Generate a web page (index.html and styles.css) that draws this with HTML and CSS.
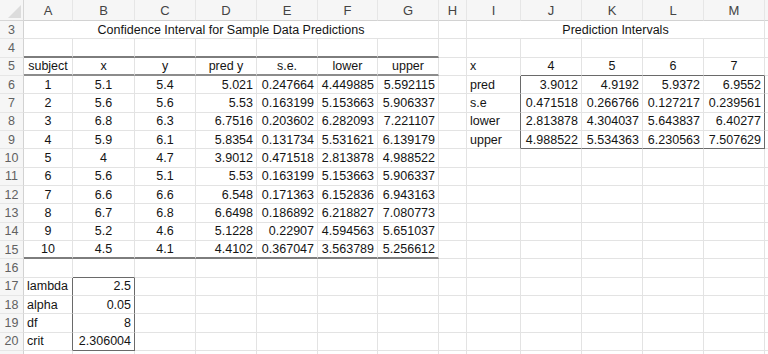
FILE: index.html
```html
<!DOCTYPE html>
<html lang="en">
<head>
<meta charset="utf-8">
<title>Confidence Interval for Sample Data Predictions</title>
<link rel="stylesheet" href="styles.css">
</head>
<body>
<div class="sheet">
  <!-- column headers -->
  <div class="c corner"></div>
  <div class="c hd">A</div><div class="c hd">B</div><div class="c hd">C</div><div class="c hd">D</div><div class="c hd">E</div><div class="c hd">F</div><div class="c hd">G</div><div class="c hd">H</div><div class="c hd">I</div><div class="c hd">J</div><div class="c hd">K</div><div class="c hd">L</div><div class="c hd">M</div><div class="c hd"></div>

  <!-- row 3 -->
  <div class="c rn">3</div>
  <div class="c ctr span-ag">Confidence Interval for Sample Data Predictions</div>
  <div class="c"></div>
  <div class="c ctr span-im">Prediction Intervals</div>
  <div class="c"></div>

  <!-- row 4 -->
  <div class="c rn">4</div>
  <div class="c tk"></div><div class="c tk"></div><div class="c tk"></div><div class="c tk"></div><div class="c tk"></div><div class="c tk"></div><div class="c tk"></div>
  <div class="c"></div><div class="c"></div><div class="c"></div><div class="c"></div><div class="c"></div><div class="c"></div><div class="c"></div>

  <!-- row 5 -->
  <div class="c rn">5</div>
  <div class="c md ctr">subject</div><div class="c md ctr">x</div><div class="c md ctr">y</div><div class="c md ctr">pred y</div><div class="c md ctr">s.e.</div><div class="c md ctr">lower</div><div class="c md ctr">upper</div>
  <div class="c"></div><div class="c">x</div>
  <div class="c ctr bb">4</div><div class="c ctr bb">5</div><div class="c ctr bb">6</div><div class="c ctr bb">7</div>
  <div class="c"></div>

  <!-- row 6 -->
  <div class="c rn">6</div>
  <div class="c ctr">1</div><div class="c ctr">5.1</div><div class="c ctr">5.4</div><div class="c r">5.021</div><div class="c r">0.247664</div><div class="c r">4.449885</div><div class="c r">5.592115</div>
  <div class="c"></div><div class="c br">pred</div>
  <div class="c r">3.9012</div><div class="c r">4.9192</div><div class="c r">5.9372</div><div class="c r br">6.9552</div>
  <div class="c"></div>

  <!-- row 7 -->
  <div class="c rn">7</div>
  <div class="c ctr">2</div><div class="c ctr">5.6</div><div class="c ctr">5.6</div><div class="c r">5.53</div><div class="c r">0.163199</div><div class="c r">5.153663</div><div class="c r">5.906337</div>
  <div class="c"></div><div class="c br">s.e</div>
  <div class="c r">0.471518</div><div class="c r">0.266766</div><div class="c r">0.127217</div><div class="c r br">0.239561</div>
  <div class="c"></div>

  <!-- row 8 -->
  <div class="c rn">8</div>
  <div class="c ctr">3</div><div class="c ctr">6.8</div><div class="c ctr">6.3</div><div class="c r">6.7516</div><div class="c r">0.203602</div><div class="c r">6.282093</div><div class="c r">7.221107</div>
  <div class="c"></div><div class="c br">lower</div>
  <div class="c r">2.813878</div><div class="c r">4.304037</div><div class="c r">5.643837</div><div class="c r br">6.40277</div>
  <div class="c"></div>

  <!-- row 9 -->
  <div class="c rn">9</div>
  <div class="c ctr">4</div><div class="c ctr">5.9</div><div class="c ctr">6.1</div><div class="c r">5.8354</div><div class="c r">0.131734</div><div class="c r">5.531621</div><div class="c r">6.139179</div>
  <div class="c"></div><div class="c br">upper</div>
  <div class="c r bb">4.988522</div><div class="c r bb">5.534363</div><div class="c r bb">6.230563</div><div class="c r br bb">7.507629</div>
  <div class="c"></div>

  <!-- row 10 -->
  <div class="c rn">10</div>
  <div class="c ctr">5</div><div class="c ctr">4</div><div class="c ctr">4.7</div><div class="c r">3.9012</div><div class="c r">0.471518</div><div class="c r">2.813878</div><div class="c r">4.988522</div>
  <div class="c"></div><div class="c"></div><div class="c"></div><div class="c"></div><div class="c"></div><div class="c"></div><div class="c"></div>

  <!-- row 11 -->
  <div class="c rn">11</div>
  <div class="c ctr">6</div><div class="c ctr">5.6</div><div class="c ctr">5.1</div><div class="c r">5.53</div><div class="c r">0.163199</div><div class="c r">5.153663</div><div class="c r">5.906337</div>
  <div class="c"></div><div class="c"></div><div class="c"></div><div class="c"></div><div class="c"></div><div class="c"></div><div class="c"></div>

  <!-- row 12 -->
  <div class="c rn">12</div>
  <div class="c ctr">7</div><div class="c ctr">6.6</div><div class="c ctr">6.6</div><div class="c r">6.548</div><div class="c r">0.171363</div><div class="c r">6.152836</div><div class="c r">6.943163</div>
  <div class="c"></div><div class="c"></div><div class="c"></div><div class="c"></div><div class="c"></div><div class="c"></div><div class="c"></div>

  <!-- row 13 -->
  <div class="c rn">13</div>
  <div class="c ctr">8</div><div class="c ctr">6.7</div><div class="c ctr">6.8</div><div class="c r">6.6498</div><div class="c r">0.186892</div><div class="c r">6.218827</div><div class="c r">7.080773</div>
  <div class="c"></div><div class="c"></div><div class="c"></div><div class="c"></div><div class="c"></div><div class="c"></div><div class="c"></div>

  <!-- row 14 -->
  <div class="c rn">14</div>
  <div class="c ctr">9</div><div class="c ctr">5.2</div><div class="c ctr">4.6</div><div class="c r">5.1228</div><div class="c r">0.22907</div><div class="c r">4.594563</div><div class="c r">5.651037</div>
  <div class="c"></div><div class="c"></div><div class="c"></div><div class="c"></div><div class="c"></div><div class="c"></div><div class="c"></div>

  <!-- row 15 -->
  <div class="c rn">15</div>
  <div class="c ctr tk">10</div><div class="c ctr tk">4.5</div><div class="c ctr tk">4.1</div><div class="c r tk">4.4102</div><div class="c r tk">0.367047</div><div class="c r tk">3.563789</div><div class="c r tk">5.256612</div>
  <div class="c"></div><div class="c"></div><div class="c"></div><div class="c"></div><div class="c"></div><div class="c"></div><div class="c"></div>

  <!-- row 16 -->
  <div class="c rn">16</div>
  <div class="c"></div><div class="c bb"></div><div class="c"></div><div class="c"></div><div class="c"></div><div class="c"></div><div class="c"></div>
  <div class="c"></div><div class="c"></div><div class="c"></div><div class="c"></div><div class="c"></div><div class="c"></div><div class="c"></div>

  <!-- row 17 -->
  <div class="c rn">17</div>
  <div class="c br">lambda</div><div class="c r br">2.5</div><div class="c"></div><div class="c"></div><div class="c"></div><div class="c"></div><div class="c"></div>
  <div class="c"></div><div class="c"></div><div class="c"></div><div class="c"></div><div class="c"></div><div class="c"></div><div class="c"></div>

  <!-- row 18 -->
  <div class="c rn">18</div>
  <div class="c br">alpha</div><div class="c r br">0.05</div><div class="c"></div><div class="c"></div><div class="c"></div><div class="c"></div><div class="c"></div>
  <div class="c"></div><div class="c"></div><div class="c"></div><div class="c"></div><div class="c"></div><div class="c"></div><div class="c"></div>

  <!-- row 19 -->
  <div class="c rn">19</div>
  <div class="c br">df</div><div class="c r br">8</div><div class="c"></div><div class="c"></div><div class="c"></div><div class="c"></div><div class="c"></div>
  <div class="c"></div><div class="c"></div><div class="c"></div><div class="c"></div><div class="c"></div><div class="c"></div><div class="c"></div>

  <!-- row 20 -->
  <div class="c rn">20</div>
  <div class="c br">crit</div><div class="c r br bb">2.306004</div><div class="c"></div><div class="c"></div><div class="c"></div><div class="c"></div><div class="c"></div>
  <div class="c"></div><div class="c"></div><div class="c"></div><div class="c"></div><div class="c"></div><div class="c"></div><div class="c"></div>

  <!-- row 21 (partially visible, label cut off by the window) -->
  <div class="c rn"></div>
  <div class="c"></div><div class="c"></div><div class="c"></div><div class="c"></div><div class="c"></div><div class="c"></div><div class="c"></div>
  <div class="c"></div><div class="c"></div><div class="c"></div><div class="c"></div><div class="c"></div><div class="c"></div><div class="c"></div>
</div>
</body>
</html>
```

FILE: styles.css
```css
* { box-sizing: border-box; }

html, body {
  margin: 0;
  background: #ffffff;
  height: 354px;
  overflow: hidden;
}

body {
  font-family: "Liberation Sans", Arial, sans-serif;
  font-size: 12.5px;
  color: #141414;
}

.sheet {
  display: grid;
  grid-template-columns: 24px 49px 62px 61px 61px 61px 60px 61px 28px 54px 61px 61px 61px 61px 3px;
  grid-template-rows: 21px repeat(19, 18.333px);
}

.c {
  display: flex;
  align-items: center;
  padding: 0 3px;
  white-space: nowrap;
  overflow: hidden;
  border-right: 1px solid #e3e3e3;
  border-bottom: 1px solid #e3e3e3;
}

.corner {
  background: #f6f6f6;
  justify-content: flex-end;
  align-items: flex-end;
  padding: 0 2px 2px 0;
  border-color: #d6d6d6;
}

.corner::after {
  content: "";
  width: 13px;
  height: 13px;
  background: #dcdcdc;
  clip-path: polygon(100% 0, 100% 100%, 0 100%);
}

.hd {
  background: #f6f6f6;
  color: #444444;
  font-size: 13px;
  justify-content: center;
  border-right-color: #e6e6e6;
  border-bottom-color: #d2d2d2;
}

.rn {
  background: #f6f6f6;
  color: #616161;
  font-size: 12.5px;
  justify-content: center;
  padding: 0;
  border-right-color: #d2d2d2;
  border-bottom-color: #e6e6e6;
}

.span-ag { grid-column: 2 / 9; }
.span-im { grid-column: 10 / 15; }

.ctr { justify-content: center; }
.r { justify-content: flex-end; }

.tk { border-bottom: 2px solid #7d7d7d; }
.md { border-bottom: 2px solid #8c8c8c; }

.br { border-right-color: #6a6a6a; }
.bb { border-bottom-color: #6a6a6a; }
```
